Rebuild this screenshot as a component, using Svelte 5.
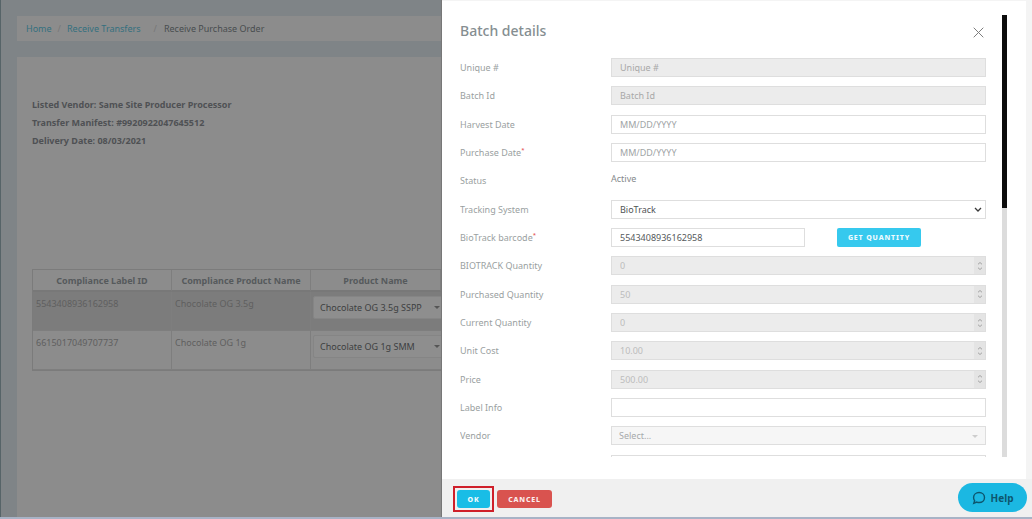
<script>
  const rows = [
    { label: 'Unique #', kind: 'text', placeholder: 'Unique #', disabled: true },
    { label: 'Batch Id', kind: 'text', placeholder: 'Batch Id', disabled: true },
    { label: 'Harvest Date', kind: 'text', placeholder: 'MM/DD/YYYY' },
    { label: 'Purchase Date', kind: 'text', placeholder: 'MM/DD/YYYY', req: true },
    { label: 'Status', kind: 'static', value: 'Active' },
    { label: 'Tracking System', kind: 'select', value: 'BioTrack' },
    { label: 'BioTrack barcode', kind: 'barcode', value: '5543408936162958', req: true },
    { label: 'BIOTRACK Quantity', kind: 'num', value: '0' },
    { label: 'Purchased Quantity', kind: 'num', value: '50' },
    { label: 'Current Quantity', kind: 'num', value: '0' },
    { label: 'Unit Cost', kind: 'num', value: '10.00' },
    { label: 'Price', kind: 'num', value: '500.00' },
    { label: 'Label Info', kind: 'text', placeholder: '' },
    { label: 'Vendor', kind: 'vendor' },
    { label: '', kind: 'text', placeholder: '' }
  ];
  const products = [
    { id: '5543408936162958', name: 'Chocolate OG 3.5g', product: 'Chocolate OG 3.5g SSPP', dark: true },
    { id: '6615017049707737', name: 'Chocolate OG 1g', product: 'Chocolate OG 1g SMM', dark: false }
  ];
</script>

<div class="page">
  <div class="behind">
    <div class="crumbs">
      <a href="#home">Home</a><i>/</i><a href="#transfers">Receive Transfers</a><i class="wide">/</i><span>Receive Purchase Order</span>
    </div>
    <div class="card">
      <div class="info">
        <p>Listed Vendor: Same Site Producer Processor</p>
        <p>Transfer Manifest: #9920922047645512</p>
        <p>Delivery Date: 08/03/2021</p>
      </div>
      <div class="table">
        <div class="cell head">Compliance Label ID</div>
        <div class="cell head">Compliance Product Name</div>
        <div class="cell head">Product Name</div>
        {#each products as p}
          <div class="cell body" class:dark={p.dark}>{p.id}</div>
          <div class="cell body" class:dark={p.dark}>{p.name}</div>
          <div class="cell body pick" class:dark={p.dark}>
            <div class="fake-select"><span>{p.product}</span><b></b></div>
          </div>
        {/each}
      </div>
    </div>
  </div>

  <aside class="panel">
    <div class="sheet">
      <header>
        <h2>Batch details</h2>
        <svg class="close" width="11" height="11" viewBox="0 0 11 11" aria-label="Close">
          <path d="M.7.7l9.6 9.6M10.3.7.7 10.3" stroke="#7d7d7d" stroke-width="1" fill="none" />
        </svg>
      </header>
      <div class="scroll-wrap">
        <div class="form">
          {#each rows as r}
            <div class="row">
              <label>{r.label}{#if r.req}<sup>*</sup>{/if}</label>
              {#if r.kind === 'text'}
                <input placeholder={r.placeholder} disabled={r.disabled} />
              {:else if r.kind === 'static'}
                <div class="static">{r.value}</div>
              {:else if r.kind === 'select'}
                <div class="sel">
                  <select><option>{r.value}</option></select>
                  <svg width="8" height="5" viewBox="0 0 8 5"><path d="M1 1l3 3 3-3" stroke="#3a3a3a" stroke-width="1.300" fill="none" /></svg>
                </div>
              {:else if r.kind === 'barcode'}
                <div class="barcode">
                  <input class="code" value={r.value} />
                  <button class="get">GET QUANTITY</button>
                </div>
              {:else if r.kind === 'num'}
                <div class="num">
                  <input value={r.value} disabled />
                  <span class="spin">
                    <svg width="6" height="10" viewBox="0 0 6 10"><path d="M1 3.300 3 1.500l2 1.800M1 6.700l2 1.800 2-1.800" stroke="#a2a2a2" stroke-width="1" fill="none" /></svg>
                  </span>
                </div>
              {:else if r.kind === 'vendor'}
                <div class="vendor"><span>Select...</span><b></b></div>
              {/if}
            </div>
          {/each}
        </div>
        <div class="scrollbar"><div class="thumb"></div></div>
      </div>
    </div>
    <footer>
      <span class="ok-mark"><button class="ok">OK</button></span>
      <button class="cancel">CANCEL</button>
    </footer>
  </aside>

  <button class="help">
    <svg width="14" height="14" viewBox="0 0 15 15"><path d="M7.600 1.600c3.300 0 5.800 2.300 5.800 5.400s-2.500 5.400-5.800 5.400c-.9 0-1.700-.2-2.500-.5l-3.200 1.200.9-2.800C1.900 9.300 1.700 8.200 1.700 7c0-3.100 2.600-5.400 5.900-5.400z" fill="none" stroke="#0d566e" stroke-width="1.500" /></svg>
    Help
  </button>
  <div class="edge"></div>
</div>

<style>
  :global(body) { margin: 0; background: #7f8487; }
  * { box-sizing: border-box; }
  .page {
    position: relative;
    display: flex;
    width: 1032px;
    height: 519px;
    overflow: hidden;
    font-family: "Noto Sans", "Open Sans", sans-serif;
    font-size: 9px;
    background: #7f8487;
  }
  .behind {
    width: 441px;
    flex: none;
    padding: 16px 0 0 16px;
    border-left: 1px solid #566468;
    display: flex;
    flex-direction: column;
    gap: 16px;
  }
  .crumbs {
    height: 25px;
    background: #8c8c8c;
    display: flex;
    align-items: center;
    padding-left: 9px;
    color: #484c4f;
    white-space: nowrap;
  }
  .crumbs a { color: #34707f; text-decoration: none; }
  .crumbs i { font-style: normal; color: #777; margin: 0 6px; }
  .crumbs i.wide { margin: 0 7px 0 13px; }
  .card {
    flex: 1;
    background: #8c8c8c;
    padding: 42px 0 0 15px;
  }
  .info p {
    margin: 0 0 8.300px;
    line-height: 10px;
    font-weight: 700;
    color: #4f5154;
    white-space: nowrap;
  }
  .info { height: 171px; padding-top: 1.500px; margin-top: -1px; }
  .table {
    display: grid;
    grid-template-columns: 139px 139px 1fr;
    grid-template-rows: 22px 39px 39px;
    border: 1px solid #7b7b7b;
    border-right: none;
  }
  .cell { border-right: 1px solid #7e7e7e; color: #5f5f5f; padding: 5px 3px; }
  .head {
    font-weight: 700;
    color: #565a5c;
    text-align: center;
    border-bottom: 2px solid #787878;
    padding-top: 4px;
    white-space: nowrap;
  }
  .body { border-bottom: 1px solid #7e7e7e; }
  .dark { background: #7c7c7c; }
  .pick { padding: 4px 0 0 2px; border-right: none; overflow: hidden; }
  .fake-select {
    display: flex;
    justify-content: space-between;
    align-items: center;
    width: 133px;
    height: 23px;
    background: #8e8e8e;
    border: 1px solid #858585;
    border-radius: 2px;
    padding: 0 5px 0 6px;
    color: #3d3f41;
    white-space: nowrap;
  }
  .fake-select b {
    width: 0; height: 0;
    border: 3px solid transparent;
    border-top-color: #555;
    border-bottom: 0;
  }

  .panel {
    flex: 1;
    display: flex;
    flex-direction: column;
    border-left: 1px solid #777;
    background: #f4f4f4;
    padding-top: 1px;
  }
  .sheet { flex: 1; min-height: 0; background: #fff; margin-right: 6px; display: flex; flex-direction: column; }
  header {
    height: 53px;
    flex: none;
    display: flex;
    justify-content: space-between;
    padding: 20px 42px 0 18px;
  }
  h2 {
    margin: 0;
    font-size: 14px;
    line-height: 20px;
    font-weight: 500;
    color: #858e91;
  }
  .close { margin-top: 6px; }
  .scroll-wrap { position: relative; flex: 1; min-height: 0; padding-left: 18px; }
  .form { height: 403px; overflow: hidden; width: 526px; }
  .row {
    display: grid;
    grid-template-columns: 151px 375px;
    align-items: center;
    height: 28.330px;
    padding: 4px 0 5px;
  }
  label { color: #9a9fa1; white-space: nowrap; }
  sup { color: #e23b3b; font-size: 6px; line-height: 0; }
  input, select {
    width: 100%;
    height: 19px;
    border: 1px solid #dedede;
    border-radius: 0;
    background: #fff;
    font: inherit;
    padding: 0 8px;
    color: #55595b;
    outline: none;
  }
  input::placeholder { color: #a0a4a6; opacity: 1; }
  input:disabled { background: #ececec; color: #bcbcbc; }
  input:disabled::placeholder { color: #a8a8a8; }
  select { appearance: none; color: #4f5355; display: block; }
  .sel { position: relative; }
  .sel svg { position: absolute; right: 4px; top: 7px; }
  .static { color: #85898b; margin-top: -4px; }
  .barcode { display: flex; align-items: center; gap: 32px; }
  .code { width: 194px; color: #55595b; }
  button { font-family: inherit; border: none; cursor: pointer; }
  .get {
    width: 84px;
    height: 19px;
    border-radius: 2px;
    background: #36c9ee;
    color: #eefbff;
    font-size: 7px;
    font-weight: 800;
    letter-spacing: .85px;
    padding: 0;
  }
  .num { position: relative; }
  .spin {
    position: absolute;
    right: 1px; top: 1px; bottom: 1px;
    width: 11px;
    background: #e4e4e4;
    display: flex;
    align-items: center;
    justify-content: center;
  }
  .vendor {
    height: 19px;
    border: 1px solid #dedede;
    background: #f6f6f6;
    display: flex;
    justify-content: space-between;
    align-items: center;
    padding: 0 7px;
    color: #a6a9ab;
  }
  .vendor b { width: 0; height: 0; border: 3px solid transparent; border-top-color: #cdcdcd; border-bottom: 0; margin-top: 2px; }
  .scrollbar {
    position: absolute;
    left: 560px; top: -39px; bottom: 22px;
    width: 5px;
    background: #dcdcdc;
  }
  .thumb { height: 193px; background: #0c0c0c; }

  footer {
    height: 38px;
    flex: none;
    background: #f0f0f0;
    display: flex;
    align-items: center;
    gap: 3px;
    padding: 2px 0 0 11px;
    margin-bottom: 2px;
  }
  .ok-mark { display: flex; padding: 2px; border: 2px solid #cf1f2a; height: 26px; }
  .ok, .cancel {
    height: 18px;
    border-radius: 3px;
    color: #f4fbfd;
    font-size: 7px;
    font-weight: 800;
    letter-spacing: .8px;
    padding: 0;
  }
  .ok { width: 33px; background: #19bde6; }
  .cancel { width: 55px; background: #d9534f; color: #fbeeee; }
  .help {
    position: absolute;
    left: 958px; top: 483px;
    width: 69px; height: 29px;
    border-radius: 15px;
    background: #1bb8e2;
    color: #0d566e;
    font-size: 10px;
    font-weight: 700;
    display: flex;
    align-items: center;
    justify-content: center;
    gap: 5px;
  }
  .edge { position: absolute; left: 0; right: 0; bottom: 0; height: 2px; background: #a8b3c6; }
</style>
